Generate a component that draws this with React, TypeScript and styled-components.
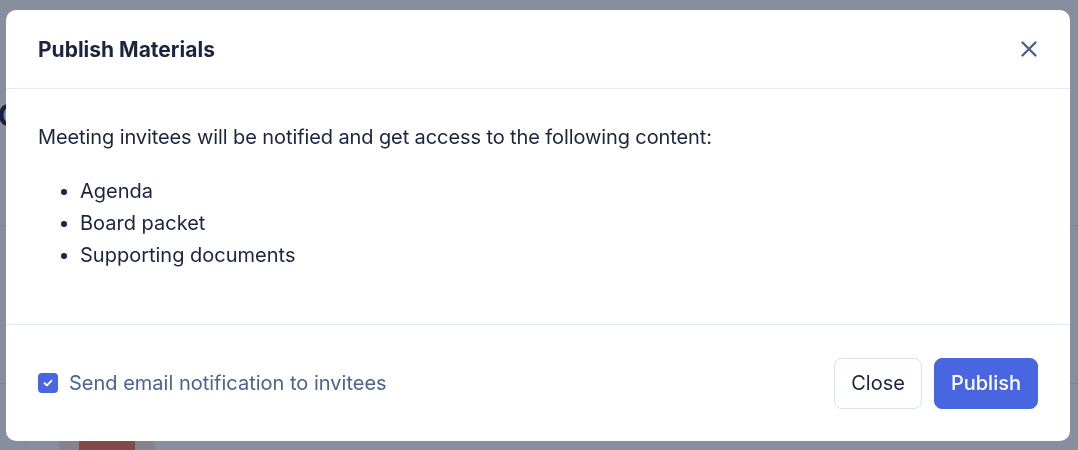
import { ReactElement } from "react";
import styled, { createGlobalStyle } from "styled-components";

const GlobalStyle = createGlobalStyle`
  html, body {
    margin: 0;
    padding: 0;
    background: #ffffff;
    font-family: Inter, "Noto Sans", sans-serif;
    -webkit-font-smoothing: antialiased;
  }
  * {
    box-sizing: border-box;
  }
`;

const items = ["Agenda", "Board packet", "Supporting documents"];

function CloseIcon(): ReactElement {
  return (
    <svg width="18" height="18" viewBox="0 0 18 18" fill="none">
      <path
        d="M2.5 2.5L15.5 15.5M15.5 2.5L2.5 15.5"
        stroke="#4b6284"
        strokeWidth="2.4"
        strokeLinecap="round"
      />
    </svg>
  );
}

function CheckIcon(): ReactElement {
  return (
    <svg width="12" height="12" viewBox="0 0 12 12" fill="none">
      <path
        d="M2.6 6.2L5 8.4L9.4 3.8"
        stroke="#ffffff"
        strokeWidth="1.9"
        strokeLinecap="round"
        strokeLinejoin="round"
      />
    </svg>
  );
}

export default function App(): ReactElement {
  return (
    <>
      <GlobalStyle />
      <Page>
        <PageHeader>
          <PageTitle>Board</PageTitle>
          <PageSub>Agenda</PageSub>
        </PageHeader>
        <PageRule />
        <PageSpacer />
        <PageRule />
        <PageBottom>
          <BottomCell />
          <BadgeWrap>
            <Badge />
          </BadgeWrap>
        </PageBottom>
      </Page>
      <Overlay>
        <Dialog>
          <Header>
            <Title>Publish Materials</Title>
            <IconButton aria-label="Close">
              <CloseIcon />
            </IconButton>
          </Header>
          <Body>
            <Lead>
              Meeting invitees will be notified and get access to the following
              content:
            </Lead>
            <List>
              {items.map((item) => (
                <li key={item}>{item}</li>
              ))}
            </List>
          </Body>
          <Footer>
            <CheckLabel>
              <Check>
                <CheckIcon />
              </Check>
              Send email notification to invitees
            </CheckLabel>
            <Actions>
              <Button variant="secondary">Close</Button>
              <Button variant="primary">Publish</Button>
            </Actions>
          </Footer>
        </Dialog>
      </Overlay>
    </>
  );
}

const Page = styled.div`
  width: 1078px;
  height: 450px;
  overflow: hidden;
  display: flex;
  flex-direction: column;
`;

const PageHeader = styled.div`
  display: flex;
  flex-direction: column;
  margin-left: -91px;
  padding-top: 90px;
  height: 225px;
`;

const PageTitle = styled.div`
  font-size: 40px;
  font-weight: 500;
  color: #1b2440;
  line-height: 44px;
`;

const PageSub = styled.div`
  font-size: 18px;
  color: #4a6491;
  margin-top: 8px;
`;

const PageRule = styled.div`
  height: 1px;
  background: #e3e8ef;
`;

const PageSpacer = styled.div`
  height: 157px;
`;

const PageBottom = styled.div`
  flex: 1;
  display: flex;
  align-items: flex-end;
`;

const BottomCell = styled.div`
  width: 27px;
  height: 100%;
  border-right: 1px solid #f0f2f5;
`;

const BadgeWrap = styled.div`
  margin-left: 32px;
  padding: 0 20px;
  height: 100%;
  background: #fde9e2;
  display: flex;
`;

const Badge = styled.div`
  width: 56px;
  margin-top: 57px;
  background: #ee7652;
`;

const Overlay = styled.div`
  position: fixed;
  inset: 0;
  background: rgba(16, 30, 60, 0.5);
  display: flex;
  align-items: flex-start;
  justify-content: flex-start;
  padding: 10px 0 0 6px;
`;

const Dialog = styled.div`
  width: 1064px;
  background: #ffffff;
  border-radius: 10px;
  display: flex;
  flex-direction: column;
  overflow: hidden;
`;

const Header = styled.div`
  height: 79px;
  padding: 0 28px 0 32px;
  display: flex;
  align-items: center;
  justify-content: space-between;
  border-bottom: 1px solid #e3e9f3;
`;

const Title = styled.h2`
  margin: 0;
  font-size: 21px;
  font-weight: 700;
  color: #1b2440;
`;

const IconButton = styled.button`
  border: none;
  background: none;
  padding: 4px;
  display: flex;
  cursor: pointer;
`;

const Body = styled.div`
  height: 236px;
  padding: 32px 32px 0;
  border-bottom: 1px solid #e3e9f3;
  color: #1b2440;
  font-size: 20px;
`;

const Lead = styled.p`
  margin: 0;
  line-height: 32px;
  letter-spacing: -0.1px;
`;

const List = styled.ul`
  margin: 22px 0 0;
  padding-left: 42px;

  li {
    line-height: 32px;
  }
`;

const Footer = styled.div`
  height: 116px;
  padding: 0 32px;
  display: flex;
  align-items: center;
  justify-content: space-between;
`;

const CheckLabel = styled.label`
  display: flex;
  align-items: center;
  gap: 11px;
  font-size: 20px;
  color: #4a6491;
  cursor: pointer;
`;

const Check = styled.span`
  width: 20px;
  height: 20px;
  border-radius: 4px;
  background: #4866e0;
  display: flex;
  align-items: center;
  justify-content: center;
`;

const Actions = styled.div`
  display: flex;
  gap: 12px;
`;

const Button = styled.button<{ variant: "primary" | "secondary" }>`
  height: 51px;
  padding: 0 16px;
  border-radius: 8px;
  font-family: Inter, "Noto Sans", sans-serif;
  font-size: 20px;
  font-weight: ${(p) => (p.variant === "primary" ? 500 : 400)};
  cursor: pointer;
  border: 1px solid
    ${(p) => (p.variant === "primary" ? "#4866e0" : "#d8e1ee")};
  background: ${(p) => (p.variant === "primary" ? "#4866e0" : "#ffffff")};
  color: ${(p) => (p.variant === "primary" ? "#ffffff" : "#1b2440")};
`;
